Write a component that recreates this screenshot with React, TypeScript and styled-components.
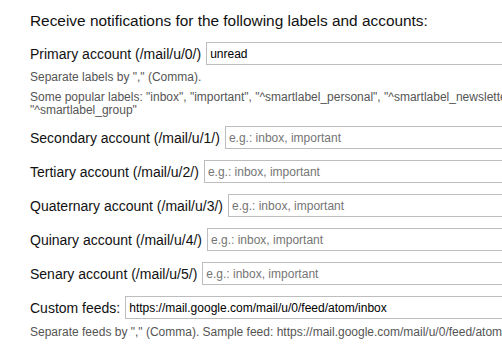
import React from "react";
import styled, { createGlobalStyle } from "styled-components";

const accounts = [
  { name: "Secondary", index: 1 },
  { name: "Tertiary", index: 2 },
  { name: "Quaternary", index: 3 },
  { name: "Quinary", index: 4 },
  { name: "Senary", index: 5 },
];

const GlobalStyle = createGlobalStyle`
  html, body {
    margin: 0;
    padding: 0;
    background: #ffffff;
    overflow: hidden;
  }
  body {
    font-family: "Liberation Sans", Arial, sans-serif;
    color: #222;
  }
`;

const App = () => {
  return (
    <>
      <GlobalStyle />
      <Page>
        <Heading>Receive notifications for the following labels and accounts:</Heading>
        <Row $top={0}>
          <Label>Primary account (/mail/u/0/)</Label>
          <Field defaultValue="unread" />
        </Row>
        <Hint $top={6}>Separate labels by "," (Comma).</Hint>
        <Hint $top={7}>
          Some popular labels: "inbox", "important", "^smartlabel_personal",
          "^smartlabel_newsletter", "^smartlabel_notification",
          <br />
          "^smartlabel_group"
        </Hint>
        {accounts.map((a) => (
          <Row key={a.index} $top={a.index === 1 ? 9 : 11}>
            <Label>
              {a.name} account (/mail/u/{a.index}/)
            </Label>
            <Field placeholder="e.g.: inbox, important" />
          </Row>
        ))}
        <Row $top={11}>
          <Label>Custom feeds:</Label>
          <Field defaultValue="https://mail.google.com/mail/u/0/feed/atom/inbox" />
        </Row>
        <Hint $top={7}>
          Separate feeds by "," (Comma). Sample feed:
          https://mail.google.com/mail/u/0/feed/atom/
        </Hint>
      </Page>
    </>
  );
};

export default App;

const Page = styled.div`
  width: 472px;
  padding: 12px 0 0 30px;
  display: flex;
  flex-direction: column;
`;

const Heading = styled.div`
  font-size: 15.4px;
  line-height: 18px;
  color: #111;
  margin-bottom: 12px;
`;

const Row = styled.div<{ $top?: number }>`
  display: flex;
  align-items: center;
  gap: 5px;
  margin-top: ${(p) => p.$top ?? 0}px;
  white-space: nowrap;
`;

const Label = styled.span`
  font-size: 14px;
  color: #111;
`;

const Field = styled.input`
  flex: 0 0 420px;
  height: 23px;
  box-sizing: border-box;
  border: 1px solid #bdbdbd;
  padding: 2px 3px;
  font-family: "Liberation Sans", Arial, sans-serif;
  font-size: 12px;
  color: #000;
  outline: none;
  &::placeholder {
    color: #757575;
  }
`;

const Hint = styled.div<{ $top?: number }>`
  margin-top: ${(p) => p.$top ?? 0}px;
  font-size: 12px;
  line-height: 13px;
  color: #555;
  white-space: nowrap;
`;
